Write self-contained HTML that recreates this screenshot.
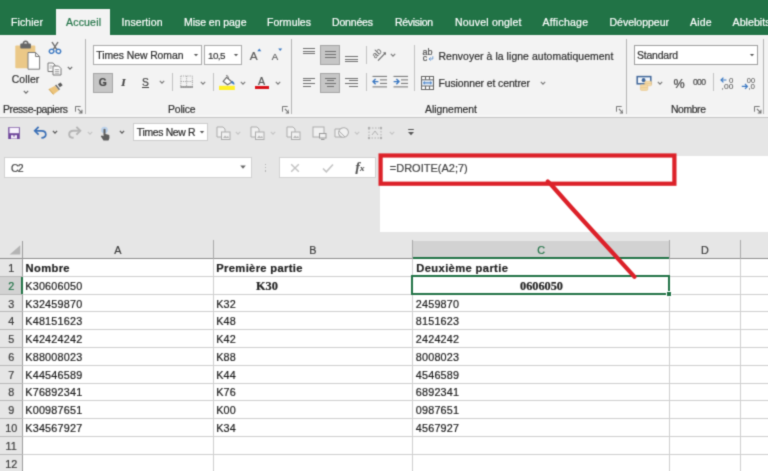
<!DOCTYPE html>
<html lang="fr"><head><meta charset="utf-8"><title>Excel - DROITE</title>
<style>
html,body{margin:0;padding:0;}
body{width:768px;height:471px;overflow:hidden;position:relative;background:#e6e6e6;font-family:"Liberation Sans",sans-serif;}
.b{position:absolute;display:block;}
.t{position:absolute;display:block;white-space:nowrap;-webkit-text-stroke:0.2px currentColor;}
#root{position:absolute;left:0;top:0;width:768px;height:471px;overflow:hidden;filter:url(#soft);}
</style></head><body><svg width="0" height="0" style="position:absolute"><defs><filter id="soft" x="0" y="0" width="100%" height="100%" color-interpolation-filters="sRGB"><feConvolveMatrix order="3" kernelMatrix="0.0256 0.1088 0.0256 0.1088 0.4624 0.1088 0.0256 0.1088 0.0256" edgeMode="duplicate" preserveAlpha="true"/></filter></defs></svg><div id="root">
<div class="b " style="left:0.00px;top:0.00px;width:768.00px;height:471.00px;background:#e6e6e6;"></div>
<div class="b " style="left:0.00px;top:0.00px;width:768.00px;height:35.00px;background:#217346;"></div>
<div class="b " style="left:0.00px;top:35.00px;width:768.00px;height:82.00px;background:#f3f3f3;"></div>
<div class="b " style="left:0.00px;top:114.50px;width:768.00px;height:2.00px;background:#f7f7f7;"></div>
<div class="b " style="left:0.00px;top:117.00px;width:768.00px;height:1.00px;background:#c4c4c4;"></div>
<div class="b " style="left:56.00px;top:9.00px;width:54.00px;height:27.00px;background:#f3f3f3;"></div>
<span class="t" style="left:11.00px;top:17.00px;font-size:10.50px;line-height:10.50px;color:#fff;letter-spacing:0.082px;">Fichier</span>
<span class="t" style="left:66.00px;top:17.00px;font-size:10.50px;line-height:10.50px;color:#217346;letter-spacing:0.192px;">Accueil</span>
<span class="t" style="left:121.50px;top:17.00px;font-size:10.50px;line-height:10.50px;color:#fff;letter-spacing:0.091px;">Insertion</span>
<span class="t" style="left:184.00px;top:17.00px;font-size:10.50px;line-height:10.50px;color:#fff;letter-spacing:-0.049px;">Mise en page</span>
<span class="t" style="left:267.00px;top:17.00px;font-size:10.50px;line-height:10.50px;color:#fff;letter-spacing:0.034px;">Formules</span>
<span class="t" style="left:332.00px;top:17.00px;font-size:10.50px;line-height:10.50px;color:#fff;letter-spacing:-0.172px;">Données</span>
<span class="t" style="left:395.00px;top:17.00px;font-size:10.50px;line-height:10.50px;color:#fff;letter-spacing:-0.324px;">Révision</span>
<span class="t" style="left:455.00px;top:17.00px;font-size:10.50px;line-height:10.50px;color:#fff;letter-spacing:0.191px;">Nouvel onglet</span>
<span class="t" style="left:542.50px;top:17.00px;font-size:10.50px;line-height:10.50px;color:#fff;letter-spacing:0.239px;">Affichage</span>
<span class="t" style="left:609.50px;top:17.00px;font-size:10.50px;line-height:10.50px;color:#fff;">Développeur</span>
<span class="t" style="left:690.00px;top:17.00px;font-size:10.50px;line-height:10.50px;color:#fff;letter-spacing:0.161px;">Aide</span>
<span class="t" style="left:732.50px;top:17.00px;font-size:10.70px;line-height:10.70px;color:#fff;">Ablebits</span>
<div class="b " style="left:85.10px;top:39.00px;width:1.00px;height:74.50px;background:#b4b4b4;"></div>
<div class="b " style="left:291.00px;top:39.00px;width:1.00px;height:74.50px;background:#b4b4b4;"></div>
<div class="b " style="left:625.90px;top:39.00px;width:1.00px;height:74.50px;background:#b4b4b4;"></div>
<div class="b " style="left:763.10px;top:39.00px;width:1.00px;height:74.50px;background:#b4b4b4;"></div>
<div class="b " style="left:172.00px;top:73.00px;width:1.00px;height:18.00px;background:#c2c2c2;"></div>
<div class="b " style="left:212.50px;top:73.00px;width:1.00px;height:18.00px;background:#c2c2c2;"></div>
<div class="b " style="left:365.50px;top:46.00px;width:1.00px;height:18.00px;background:#c2c2c2;"></div>
<div class="b " style="left:365.50px;top:73.00px;width:1.00px;height:18.00px;background:#c2c2c2;"></div>
<div class="b " style="left:413.50px;top:45.00px;width:1.00px;height:46.00px;background:#c2c2c2;"></div>
<div class="b " style="left:712.50px;top:73.00px;width:1.00px;height:18.00px;background:#c2c2c2;"></div>
<span class="t" style="left:3.00px;top:105.00px;font-size:10.40px;line-height:10.40px;color:#303030;letter-spacing:-0.380px;">Presse-papiers</span>
<span class="t" style="left:168.00px;top:105.00px;font-size:10.40px;line-height:10.40px;color:#303030;letter-spacing:-0.165px;">Police</span>
<span class="t" style="left:425.00px;top:105.00px;font-size:10.40px;line-height:10.40px;color:#303030;">Alignement</span>
<span class="t" style="left:671.00px;top:105.00px;font-size:10.40px;line-height:10.40px;color:#303030;letter-spacing:-0.398px;">Nombre</span>
<svg class="b" style="left:75.00px;top:106.20px" width="7.6" height="7.6" viewBox="0 0 8 8"><path d="M0.5 6 V0.5 H6" fill="none" stroke="#6e6e6e" stroke-width="1"/><path d="M3 3 L7 7 M7.3 4 V7.3 H4" fill="none" stroke="#6e6e6e" stroke-width="1.1"/></svg>
<svg class="b" style="left:281.60px;top:106.20px" width="7.6" height="7.6" viewBox="0 0 8 8"><path d="M0.5 6 V0.5 H6" fill="none" stroke="#6e6e6e" stroke-width="1"/><path d="M3 3 L7 7 M7.3 4 V7.3 H4" fill="none" stroke="#6e6e6e" stroke-width="1.1"/></svg>
<svg class="b" style="left:615.80px;top:106.20px" width="7.6" height="7.6" viewBox="0 0 8 8"><path d="M0.5 6 V0.5 H6" fill="none" stroke="#6e6e6e" stroke-width="1"/><path d="M3 3 L7 7 M7.3 4 V7.3 H4" fill="none" stroke="#6e6e6e" stroke-width="1.1"/></svg>
<svg class="b" style="left:754.40px;top:106.20px" width="7.6" height="7.6" viewBox="0 0 8 8"><path d="M0.5 6 V0.5 H6" fill="none" stroke="#6e6e6e" stroke-width="1"/><path d="M3 3 L7 7 M7.3 4 V7.3 H4" fill="none" stroke="#6e6e6e" stroke-width="1.1"/></svg>
<svg class="b" style="left:14.00px;top:40.00px" width="28" height="31" viewBox="0 0 28 31">
<rect x="1.3" y="5.5" width="20" height="22.7" rx="1" fill="#ebc887"/>
<rect x="6.3" y="3.6" width="10.6" height="5" rx="0.8" fill="#666"/>
<path d="M9.3 4 Q9.3 1.2 11.6 1.2 Q13.9 1.2 13.9 4" fill="none" stroke="#666" stroke-width="1.5"/>
<path d="M14 12.5 H21.6 L25.6 16.5 V29.2 H14 Z" fill="#fff" stroke="#7a7a7a" stroke-width="1"/>
<path d="M21.6 12.5 V16.5 H25.6" fill="none" stroke="#7a7a7a" stroke-width="1"/>
</svg>
<span class="t" style="left:11.80px;top:75.00px;font-size:10.40px;line-height:10.40px;color:#303030;letter-spacing:0.047px;">Coller</span>
<svg class="b" style="left:21.70px;top:88.30px" width="8" height="8" viewBox="0 0 8 8"><path d="M1.7999999999999998 2.9 L4 5.1 L6.2 2.9" fill="none" stroke="#666" stroke-width="1.1"/></svg>
<svg class="b" style="left:47.50px;top:40.50px" width="14" height="14" viewBox="0 0 14 14">
<path d="M4 1 L8.8 8.6 M10 1 L5.2 8.6" stroke="#6a6a6a" stroke-width="1.4" fill="none"/>
<ellipse cx="3.6" cy="10.3" rx="2.3" ry="2" fill="none" stroke="#3b78c2" stroke-width="1.4" transform="rotate(-25 3.6 10.3)"/>
<ellipse cx="10.4" cy="10.3" rx="2.3" ry="2" fill="none" stroke="#3b78c2" stroke-width="1.4" transform="rotate(25 10.4 10.3)"/>
</svg>
<svg class="b" style="left:46.50px;top:61.50px" width="15" height="14" viewBox="0 0 15 14">
<path d="M1 1 H6 L8 3 V9.5 H1 Z" fill="#fff" stroke="#777" stroke-width="1"/>
<path d="M2.6 4 H5.2 M2.6 6 H4.6" stroke="#8a8a8a" stroke-width="0.8"/>
<path d="M6 4 H11.5 L14 6.5 V13 H6 Z" fill="#fff" stroke="#777" stroke-width="1"/>
<path d="M7.8 7.6 H12.2 M7.8 9.4 H12.2 M7.8 11.2 H12.2" stroke="#8a8a8a" stroke-width="0.8"/>
</svg>
<svg class="b" style="left:66.20px;top:64.00px" width="8" height="8" viewBox="0 0 8 8"><path d="M1.7999999999999998 2.9 L4 5.1 L6.2 2.9" fill="none" stroke="#666" stroke-width="1.1"/></svg>
<svg class="b" style="left:47.50px;top:82.00px" width="15" height="13" viewBox="0 0 15 13">
<path d="M9.8 2.2 L12.6 0.4 L14.6 3.2 L11.8 5.2 Z" fill="#5a5a5a"/>
<path d="M8.2 2.6 L12 7.2 L10.8 8.2 L7 3.6 Z" fill="#6a6a6a"/>
<path d="M7 3.8 L10.8 8.4 L5.4 12.4 L0.8 7 Z" fill="#ecc47c"/>
<path d="M0.8 7 L5.4 12.4" stroke="#c99b45" stroke-width="0.9" fill="none"/>
</svg>
<div class="b " style="left:93.30px;top:45.40px;width:108.50px;height:20.00px;background:#fff;border:1px solid #ababab;box-sizing:border-box;"></div>
<span class="t" style="left:96.30px;top:51.00px;font-size:10.40px;line-height:10.40px;color:#2e2e2e;letter-spacing:-0.060px;">Times New Roman</span>
<svg class="b" style="left:191.80px;top:51.40px" width="8" height="8" viewBox="0 0 8 8"><path d="M1.9 2.95 L6.1 2.95 L4 5.35 Z" fill="#555"/></svg>
<div class="b " style="left:204.40px;top:45.40px;width:38.00px;height:20.00px;background:#fff;border:1px solid #ababab;box-sizing:border-box;"></div>
<span class="t" style="left:208.00px;top:51.00px;font-size:9.80px;line-height:9.80px;color:#333;letter-spacing:-0.525px;">10,5</span>
<svg class="b" style="left:231.60px;top:51.40px" width="8" height="8" viewBox="0 0 8 8"><path d="M1.9 2.95 L6.1 2.95 L4 5.35 Z" fill="#555"/></svg>
<span class="t" style="left:249.80px;top:51.00px;font-size:11.80px;line-height:11.80px;color:#5a5a5a;">A</span>
<svg class="b" style="left:256.60px;top:48.20px" width="5" height="4" viewBox="0 0 5 4"><path d="M0.3 3.3 L2.3 0.5 L4.3 3.3 Z" fill="#3b78c2"/></svg>
<span class="t" style="left:271.80px;top:52.00px;font-size:9.60px;line-height:9.60px;color:#5a5a5a;">A</span>
<svg class="b" style="left:278.00px;top:48.00px" width="5" height="4" viewBox="0 0 5 4"><path d="M0.2 0.6 L4.2 0.6 L2.2 3 Z" fill="#3b78c2"/></svg>
<div class="b " style="left:93.30px;top:73.00px;width:19.50px;height:19.70px;background:#c6c6c6;border:1px solid #a6a6a6;box-sizing:border-box;"></div>
<span class="t" style="left:98.79px;top:78.00px;font-size:10.30px;line-height:10.30px;color:#444;font-weight:bold;">G</span>
<span class="t" style="left:121.20px;top:77.00px;font-size:11.30px;line-height:11.30px;color:#444;font-weight:bold;font-style:italic;font-family:'Liberation Serif', serif;">I</span>
<span class="t" style="left:142.06px;top:78.00px;font-size:10.30px;line-height:10.30px;color:#444;">S</span>
<div class="b " style="left:142.00px;top:86.60px;width:7.00px;height:1.00px;background:#444;"></div>
<svg class="b" style="left:157.60px;top:78.40px" width="8" height="8" viewBox="0 0 8 8"><path d="M1.7999999999999998 2.9 L4 5.1 L6.2 2.9" fill="none" stroke="#777" stroke-width="1.1"/></svg>
<svg class="b" style="left:179.50px;top:75.40px" width="14" height="13" viewBox="0 0 14 13">
<rect x="0.8" y="1" width="11.6" height="11" fill="none" stroke="#a0a0a0" stroke-width="1" stroke-dasharray="1.1 1.1"/>
<path d="M6.6 1 V12 M0.8 6.5 H12.4" stroke="#a0a0a0" stroke-width="1" stroke-dasharray="1.1 1.1"/>
<path d="M0.3 12 H13" stroke="#666" stroke-width="1.1"/>
</svg>
<svg class="b" style="left:198.50px;top:78.50px" width="8" height="8" viewBox="0 0 8 8"><path d="M1.7999999999999998 2.9 L4 5.1 L6.2 2.9" fill="none" stroke="#777" stroke-width="1.1"/></svg>
<svg class="b" style="left:219.00px;top:74.00px" width="17" height="17" viewBox="0 0 17 17">
<path d="M7.6 3.4 L13 8 L8.6 10.8 L4.2 7.4 Z" fill="#fff" stroke="#666" stroke-width="1.1"/>
<path d="M7.2 1.6 Q9.4 1.2 9.4 5" stroke="#666" stroke-width="1" fill="none"/>
<path d="M13 6.8 Q16.2 8.6 15.2 11 Q13.8 9.4 12 9 Z" fill="#3b78c2"/>
<rect x="0" y="11.8" width="15.8" height="4.2" fill="#fff028"/>
</svg>
<svg class="b" style="left:239.20px;top:78.50px" width="8" height="8" viewBox="0 0 8 8"><path d="M1.7999999999999998 2.9 L4 5.1 L6.2 2.9" fill="none" stroke="#777" stroke-width="1.1"/></svg>
<span class="t" style="left:258.00px;top:76.00px;font-size:10.60px;line-height:10.60px;color:#555;">A</span>
<div class="b " style="left:254.60px;top:85.60px;width:14.40px;height:3.80px;background:#d9141c;"></div>
<svg class="b" style="left:274.00px;top:78.50px" width="8" height="8" viewBox="0 0 8 8"><path d="M1.7999999999999998 2.9 L4 5.1 L6.2 2.9" fill="none" stroke="#777" stroke-width="1.1"/></svg>
<div class="b " style="left:302.70px;top:48.30px;width:12.60px;height:1.00px;background:#707070;"></div>
<div class="b " style="left:302.70px;top:50.80px;width:12.60px;height:1.00px;background:#707070;"></div>
<div class="b " style="left:302.70px;top:53.30px;width:12.60px;height:1.00px;background:#707070;"></div>
<div class="b " style="left:320.40px;top:45.20px;width:19.60px;height:20.20px;background:#c6c6c6;border:1px solid #a6a6a6;box-sizing:border-box;"></div>
<div class="b " style="left:324.50px;top:51.10px;width:11.60px;height:1.00px;background:#707070;"></div>
<div class="b " style="left:324.50px;top:53.80px;width:11.60px;height:1.00px;background:#707070;"></div>
<div class="b " style="left:324.50px;top:56.50px;width:11.60px;height:1.00px;background:#707070;"></div>
<div class="b " style="left:345.40px;top:56.10px;width:12.60px;height:1.00px;background:#707070;"></div>
<div class="b " style="left:345.40px;top:58.60px;width:12.60px;height:1.00px;background:#707070;"></div>
<div class="b " style="left:345.40px;top:61.10px;width:12.60px;height:1.00px;background:#707070;"></div>
<div class="b " style="left:302.70px;top:77.60px;width:12.60px;height:1.00px;background:#707070;"></div>
<div class="b " style="left:302.70px;top:80.30px;width:8.60px;height:1.00px;background:#707070;"></div>
<div class="b " style="left:302.70px;top:83.00px;width:12.60px;height:1.00px;background:#707070;"></div>
<div class="b " style="left:302.70px;top:85.70px;width:8.60px;height:1.00px;background:#707070;"></div>
<div class="b " style="left:320.40px;top:72.80px;width:19.60px;height:19.80px;background:#c6c6c6;border:1px solid #a6a6a6;box-sizing:border-box;"></div>
<div class="b " style="left:324.50px;top:77.60px;width:11.60px;height:1.00px;background:#707070;"></div>
<div class="b " style="left:326.50px;top:80.30px;width:7.60px;height:1.00px;background:#707070;"></div>
<div class="b " style="left:324.50px;top:83.00px;width:11.60px;height:1.00px;background:#707070;"></div>
<div class="b " style="left:326.50px;top:85.70px;width:7.60px;height:1.00px;background:#707070;"></div>
<div class="b " style="left:345.40px;top:77.60px;width:12.60px;height:1.00px;background:#707070;"></div>
<div class="b " style="left:349.40px;top:80.30px;width:8.60px;height:1.00px;background:#707070;"></div>
<div class="b " style="left:345.40px;top:83.00px;width:12.60px;height:1.00px;background:#707070;"></div>
<div class="b " style="left:349.40px;top:85.70px;width:8.60px;height:1.00px;background:#707070;"></div>
<svg class="b" style="left:371.00px;top:46.00px" width="17" height="17" viewBox="0 0 17 17">
<text x="2" y="10.5" font-size="9.2" fill="#555" font-family="Liberation Sans, sans-serif" transform="rotate(-45 6 9)">ab</text>
<path d="M7 14.6 L14.2 7.2" stroke="#666" stroke-width="1.1"/>
<path d="M12 6.6 L15 6.2 L14.6 9.2 Z" fill="#666"/>
</svg>
<svg class="b" style="left:389.40px;top:51.00px" width="8" height="8" viewBox="0 0 8 8"><path d="M1.7999999999999998 2.9 L4 5.1 L6.2 2.9" fill="none" stroke="#777" stroke-width="1.1"/></svg>
<svg class="b" style="left:371.50px;top:75.00px" width="16" height="14" viewBox="0 0 16 14">
<path d="M0.5 1.4 H15 M0.5 11.9 H15" stroke="#707070" stroke-width="1"/>
<path d="M8 4.9 H15 M8 8.4 H15" stroke="#707070" stroke-width="1"/>
<path d="M6.4 6.6 H1.2 M3.6 4 L1 6.6 L3.6 9.2" stroke="#3b78c2" stroke-width="1.4" fill="none"/>
</svg>
<svg class="b" style="left:392.70px;top:75.00px" width="16" height="14" viewBox="0 0 16 14">
<path d="M0.5 1.4 H15 M0.5 11.9 H15" stroke="#707070" stroke-width="1"/>
<path d="M8 4.9 H15 M8 8.4 H15" stroke="#707070" stroke-width="1"/>
<path d="M0.6 6.6 H5.8 M3.4 4 L6 6.6 L3.4 9.2" stroke="#3b78c2" stroke-width="1.4" fill="none"/>
</svg>
<span class="t" style="left:422.60px;top:48.00px;font-size:9.00px;line-height:9.00px;color:#505050;letter-spacing:-0.011px;">ab</span>
<span class="t" style="left:422.80px;top:54.00px;font-size:9.00px;line-height:9.00px;color:#505050;">c</span>
<svg class="b" style="left:427.60px;top:55.60px" width="6" height="6" viewBox="0 0 6 6"><path d="M4.8 0.3 V3 H1.2 M2.6 1.4 L1 3 L2.6 4.6" stroke="#6d9bd1" stroke-width="1" fill="none"/></svg>
<span class="t" style="left:438.50px;top:52.00px;font-size:10.40px;line-height:10.40px;color:#2e2e2e;letter-spacing:0.080px;">Renvoyer à la ligne automatiquement</span>
<svg class="b" style="left:421.00px;top:75.50px" width="13" height="14" viewBox="0 0 13 14">
<rect x="0.5" y="0.5" width="12" height="13" fill="#fff" stroke="#666" stroke-width="1"/>
<rect x="1" y="4" width="11" height="5.8" fill="#e3edf8"/>
<path d="M0.5 3.8 H12.5 M0.5 10 H12.5 M4.5 0.5 V3.8 M8.5 0.5 V3.8 M4.5 10 V13.5 M8.5 10 V13.5" stroke="#666" stroke-width="1"/>
<path d="M2.6 6.9 H10.4" stroke="#3b78c2" stroke-width="1.1"/>
<path d="M4 5.6 L2.4 6.9 L4 8.2 M9 5.6 L10.6 6.9 L9 8.2" stroke="#3b78c2" stroke-width="0.9" fill="none"/>
</svg>
<span class="t" style="left:438.50px;top:79.00px;font-size:10.40px;line-height:10.40px;color:#2e2e2e;letter-spacing:-0.082px;">Fusionner et centrer</span>
<svg class="b" style="left:539.00px;top:78.50px" width="8" height="8" viewBox="0 0 8 8"><path d="M1.7999999999999998 2.9 L4 5.1 L6.2 2.9" fill="none" stroke="#777" stroke-width="1.1"/></svg>
<div class="b " style="left:633.90px;top:45.20px;width:124.20px;height:20.30px;background:#fff;border:1px solid #a0a0a0;box-sizing:border-box;"></div>
<span class="t" style="left:637.00px;top:51.00px;font-size:10.40px;line-height:10.40px;color:#2e2e2e;letter-spacing:-0.173px;">Standard</span>
<svg class="b" style="left:747.60px;top:51.30px" width="8" height="8" viewBox="0 0 8 8"><path d="M1.9 2.95 L6.1 2.95 L4 5.35 Z" fill="#555"/></svg>
<svg class="b" style="left:635.50px;top:74.50px" width="17" height="17" viewBox="0 0 17 17">
<rect x="1.2" y="1.6" width="13.6" height="7.2" fill="#f2f6fb" stroke="#41679a" stroke-width="1.5"/>
<ellipse cx="7.6" cy="5.2" rx="1.9" ry="2.1" fill="#41679a"/>
<rect x="8.8" y="6.2" width="6.8" height="4.6" rx="1.2" fill="#f3d9a6" stroke="#e6c388" stroke-width="0.6"/>
<path d="M9 8.5 H15.4" stroke="#e6c388" stroke-width="0.6"/>
<rect x="4.4" y="9.8" width="7.4" height="5.6" rx="1.2" fill="#f3d9a6" stroke="#e6c388" stroke-width="0.6"/>
<path d="M4.6 12.6 H11.6" stroke="#e6c388" stroke-width="0.6"/>
</svg>
<svg class="b" style="left:655.90px;top:78.80px" width="8" height="8" viewBox="0 0 8 8"><path d="M1.7999999999999998 2.9 L4 5.1 L6.2 2.9" fill="none" stroke="#777" stroke-width="1.1"/></svg>
<span class="t" style="left:673.60px;top:78.00px;font-size:12.60px;line-height:12.60px;color:#444;">%</span>
<span class="t" style="left:693.00px;top:78.00px;font-size:8.60px;line-height:8.60px;color:#444;letter-spacing:-0.674px;">000</span>
<svg class="b" style="left:719.50px;top:75.50px" width="15" height="14" viewBox="0 0 15 14">
<path d="M1 4 H6.4 M3.4 1.6 L1 4 L3.4 6.4" stroke="#3b78c2" stroke-width="1.2" fill="none"/>
<text x="9" y="6.6" textLength="4.4" font-family="Liberation Sans, sans-serif" fill="#4a4a4a" font-size="8" lengthAdjust="spacingAndGlyphs">0</text>
<text x="1.6" y="13" textLength="11.8" font-family="Liberation Sans, sans-serif" fill="#4a4a4a" font-size="8" lengthAdjust="spacingAndGlyphs">,00</text>
</svg>
<svg class="b" style="left:740.50px;top:75.50px" width="15" height="14" viewBox="0 0 15 14">
<text x="5.8" y="6.6" textLength="8.2" font-family="Liberation Sans, sans-serif" fill="#4a4a4a" font-size="8" lengthAdjust="spacingAndGlyphs">00</text>
<path d="M0.8 10.4 H6.4 M4 8 L6.4 10.4 L4 12.8" stroke="#3b78c2" stroke-width="1.2" fill="none"/>
<text x="7.4" y="13" textLength="6.6" font-family="Liberation Sans, sans-serif" fill="#4a4a4a" font-size="8" lengthAdjust="spacingAndGlyphs">,0</text>
</svg>
<svg class="b" style="left:8.00px;top:126.80px" width="12" height="12.2" viewBox="0 0 12 12.2">
<rect x="0.2" y="0.2" width="11.6" height="11.8" fill="#70489c"/>
<rect x="1.5" y="0.8" width="9.4" height="5.4" fill="#f7f2fc"/>
<rect x="3" y="8.2" width="6" height="3.4" fill="#f4eefa"/>
<rect x="5.3" y="8.2" width="1.4" height="1.4" fill="#70489c"/>
</svg>
<svg class="b" style="left:32.60px;top:126.30px" width="15" height="13" viewBox="0 0 15 13">
<path d="M2 4.8 H8.6 Q12.8 4.8 12.8 8.4 Q12.8 11.6 8.4 11.8" fill="none" stroke="#3a6fb6" stroke-width="1.7"/>
<path d="M5.6 0.9 L1.7 4.8 L5.6 8.7" fill="none" stroke="#3a6fb6" stroke-width="1.7"/>
</svg>
<svg class="b" style="left:51.00px;top:128.30px" width="8" height="8" viewBox="0 0 8 8"><path d="M1.9 2.95 L4 5.05 L6.1 2.95" fill="none" stroke="#555" stroke-width="1.2"/></svg>
<svg class="b" style="left:66.80px;top:126.30px" width="15" height="13" viewBox="0 0 15 13">
<path d="M13 4.8 H6.4 Q2.2 4.8 2.2 8.4 Q2.2 11.6 6.6 11.8" fill="none" stroke="#b4b4b4" stroke-width="1.9"/>
<path d="M9.4 0.9 L13.3 4.8 L9.4 8.7" fill="none" stroke="#b4b4b4" stroke-width="1.9"/>
</svg>
<svg class="b" style="left:85.50px;top:128.50px" width="8" height="8" viewBox="0 0 8 8"><path d="M1.7999999999999998 2.9 L4 5.1 L6.2 2.9" fill="none" stroke="#c4c4c4" stroke-width="1.1"/></svg>
<svg class="b" style="left:99.00px;top:125.50px" width="12" height="15" viewBox="0 0 12 15">
<circle cx="5.5" cy="4" r="3.3" fill="#b9d0ea"/>
<path d="M4.5 3.2 Q5.5 2.2 6.5 3.2 V8 L10.3 9 Q11 12 9.5 14.5 H4.5 L1.8 10.2 Q2.8 9 4.5 10.3 Z" fill="#5e5e5e"/>
</svg>
<svg class="b" style="left:118.00px;top:128.30px" width="8" height="8" viewBox="0 0 8 8"><path d="M1.9 2.95 L4 5.05 L6.1 2.95" fill="none" stroke="#555" stroke-width="1.2"/></svg>
<div class="b " style="left:133.10px;top:122.60px;width:75.20px;height:18.80px;background:#fff;border:1px solid #cdcdcd;box-sizing:border-box;"></div>
<span class="t" style="left:136.80px;top:128.00px;font-size:10.40px;line-height:10.40px;color:#2e2e2e;letter-spacing:-0.322px;">Times New R</span>
<svg class="b" style="left:198.00px;top:128.20px" width="8" height="8" viewBox="0 0 8 8"><path d="M1.7999999999999998 2.9 L6.2 2.9 L4 5.3999999999999995 Z" fill="#555"/></svg>
<svg class="b" style="left:215.50px;top:126.00px" width="15" height="14" viewBox="0 0 15 14">
<path d="M1 1 H7 L9 3 V11 H1 Z" fill="#f1f1f1" stroke="#ababab" stroke-width="1"/>
<rect x="5.5" y="6" width="8.5" height="7.5" fill="#f1f1f1" stroke="#ababab" stroke-width="1"/>
<path d="M7 12 L9 9.5 L10.5 11 L12 10 L13 12 Z" fill="#b5b5b5"/>
</svg>
<svg class="b" style="left:234.00px;top:128.50px" width="8" height="8" viewBox="0 0 8 8"><path d="M1.7999999999999998 2.9 L4 5.1 L6.2 2.9" fill="none" stroke="#c4c4c4" stroke-width="1.1"/></svg>
<svg class="b" style="left:249.50px;top:126.00px" width="15" height="14" viewBox="0 0 15 14">
<path d="M1 1 H7 L9 3 V11 H1 Z" fill="#f1f1f1" stroke="#ababab" stroke-width="1"/>
<rect x="5.5" y="6" width="8.5" height="7.5" fill="#f1f1f1" stroke="#ababab" stroke-width="1"/>
<path d="M7 12 L9 9.5 L10.5 11 L12 10 L13 12 Z" fill="#b5b5b5"/>
</svg>
<svg class="b" style="left:268.50px;top:128.50px" width="8" height="8" viewBox="0 0 8 8"><path d="M1.7999999999999998 2.9 L4 5.1 L6.2 2.9" fill="none" stroke="#c4c4c4" stroke-width="1.1"/></svg>
<svg class="b" style="left:286.00px;top:126.00px" width="15" height="14" viewBox="0 0 15 14">
<path d="M1 1 H7 L9 3 V11 H1 Z" fill="#f1f1f1" stroke="#ababab" stroke-width="1"/>
<rect x="5.5" y="6" width="8.5" height="7.5" fill="#f1f1f1" stroke="#ababab" stroke-width="1"/>
<path d="M7 12 L9 9.5 L10.5 11 L12 10 L13 12 Z" fill="#b5b5b5"/>
</svg>
<svg class="b" style="left:311.50px;top:126.00px" width="15" height="14" viewBox="0 0 15 14">
<rect x="1" y="1" width="11" height="10" fill="#f1f1f1" stroke="#ababab" stroke-width="1"/>
<rect x="7.5" y="7.5" width="6.5" height="4.5" fill="#f1f1f1" stroke="#999" stroke-width="1"/>
<path d="M9 13.5 H12.5" stroke="#999" stroke-width="1"/>
</svg>
<svg class="b" style="left:333.50px;top:126.00px" width="16" height="14" viewBox="0 0 16 14">
<path d="M1 3 H8 V11 H1 Z" fill="#f1f1f1" stroke="#ababab" stroke-width="1"/>
<ellipse cx="9.5" cy="6.5" rx="5" ry="4.8" fill="#f1f1f1" stroke="#ababab" stroke-width="1" transform="rotate(-35 9.5 6.5)"/>
<path d="M5 5 L11 11" stroke="#ababab" stroke-width="1"/>
</svg>
<svg class="b" style="left:353.00px;top:128.50px" width="8" height="8" viewBox="0 0 8 8"><path d="M1.7999999999999998 2.9 L4 5.1 L6.2 2.9" fill="none" stroke="#c4c4c4" stroke-width="1.1"/></svg>
<svg class="b" style="left:367.00px;top:126.00px" width="16" height="14" viewBox="0 0 16 14">
<rect x="2" y="2" width="12" height="10" fill="none" stroke="#b0b0b0" stroke-width="1" stroke-dasharray="1.5 1.5"/>
<circle cx="2" cy="2" r="1.2" fill="#b0b0b0"/><circle cx="14" cy="2" r="1.2" fill="#b0b0b0"/><circle cx="2" cy="12" r="1.2" fill="#b0b0b0"/><circle cx="14" cy="12" r="1.2" fill="#b0b0b0"/>
<path d="M5 9 L8 5 L11 9" stroke="#b0b0b0" fill="none" stroke-width="1"/>
</svg>
<svg class="b" style="left:387.50px;top:128.50px" width="8" height="8" viewBox="0 0 8 8"><path d="M1.7999999999999998 2.9 L4 5.1 L6.2 2.9" fill="none" stroke="#c4c4c4" stroke-width="1.1"/></svg>
<svg class="b" style="left:406.50px;top:128.00px" width="8" height="9" viewBox="0 0 8 9"><path d="M1.2 1.5 H6.8" stroke="#555" stroke-width="1"/><path d="M1 4 H7 L4 7.2 Z" fill="#555"/></svg>
<div class="b " style="left:4.20px;top:156.50px;width:247.40px;height:21.90px;background:#fff;border:1px solid #d2d2d2;box-sizing:border-box;"></div>
<span class="t" style="left:11.00px;top:163.00px;font-size:10.50px;line-height:10.50px;color:#444;letter-spacing:-0.722px;">C2</span>
<svg class="b" style="left:239.10px;top:162.50px" width="8" height="8" viewBox="0 0 8 8"><path d="M1.2000000000000002 2.6 L6.8 2.6 L4 5.7 Z" fill="#666"/></svg>
<div class="b " style="left:264.50px;top:163.60px;width:1.20px;height:1.20px;background:#b5b5b5;"></div>
<div class="b " style="left:264.50px;top:167.00px;width:1.20px;height:1.20px;background:#b5b5b5;"></div>
<div class="b " style="left:264.50px;top:170.40px;width:1.20px;height:1.20px;background:#b5b5b5;"></div>
<div class="b " style="left:279.40px;top:156.50px;width:97.10px;height:21.90px;background:#fff;border:1px solid #d2d2d2;box-sizing:border-box;"></div>
<svg class="b" style="left:290.40px;top:162.80px" width="10" height="10" viewBox="0 0 10 10"><path d="M1.2 1.2 L8.8 8.8 M8.8 1.2 L1.2 8.8" stroke="#c2c2c2" stroke-width="1.4"/></svg>
<svg class="b" style="left:322.20px;top:162.90px" width="12" height="10" viewBox="0 0 12 10"><path d="M1 5.5 L4.3 8.8 L11 1.5" stroke="#c2c2c2" stroke-width="1.5" fill="none"/></svg>
<span class="t" style="left:355.60px;top:160.00px;font-size:13.00px;line-height:13.00px;color:#555;font-weight:bold;font-style:italic;font-family:'Liberation Serif', serif;">f</span>
<span class="t" style="left:360.00px;top:164.00px;font-size:8.80px;line-height:8.80px;color:#555;font-weight:bold;font-style:italic;font-family:'Liberation Serif', serif;">x</span>
<div class="b " style="left:380.00px;top:155.50px;width:388.00px;height:76.10px;background:#fff;"></div>
<span class="t" style="left:389.80px;top:163.00px;font-size:11.00px;line-height:11.00px;color:#444;">=DROITE(A2;7)</span>
<div class="b " style="left:22.50px;top:258.50px;width:745.50px;height:212.50px;background:#fff;"></div>
<div class="b " style="left:412.60px;top:241.00px;width:257.00px;height:17.50px;background:#d2d2d2;"></div>
<div class="b " style="left:412.60px;top:256.80px;width:257.00px;height:2.00px;background:#217346;"></div>
<div class="b " style="left:0.00px;top:276.30px;width:22.50px;height:17.80px;background:#d2d2d2;"></div>
<div class="b " style="left:21.20px;top:276.30px;width:1.60px;height:17.80px;background:#217346;"></div>
<div class="b " style="left:0.00px;top:257.80px;width:412.60px;height:1.00px;background:#8e8e8e;"></div>
<div class="b " style="left:669.60px;top:257.80px;width:98.40px;height:1.00px;background:#8e8e8e;"></div>
<div class="b " style="left:22.00px;top:241.00px;width:1.00px;height:17.50px;background:#9c9c9c;"></div>
<div class="b " style="left:212.80px;top:240.00px;width:1.00px;height:18.50px;background:#aaaaaa;"></div>
<div class="b " style="left:412.10px;top:240.00px;width:1.00px;height:18.50px;background:#aaaaaa;"></div>
<div class="b " style="left:669.10px;top:240.00px;width:1.00px;height:18.50px;background:#aaaaaa;"></div>
<div class="b " style="left:739.70px;top:240.00px;width:1.00px;height:18.50px;background:#aaaaaa;"></div>
<div class="b " style="left:22.00px;top:258.50px;width:1.00px;height:17.80px;background:#9c9c9c;"></div>
<div class="b " style="left:22.00px;top:294.10px;width:1.00px;height:176.90px;background:#9c9c9c;"></div>
<div class="b " style="left:0.00px;top:275.80px;width:22.50px;height:1.00px;background:#b8b8b8;"></div>
<div class="b " style="left:0.00px;top:293.60px;width:22.50px;height:1.00px;background:#b8b8b8;"></div>
<div class="b " style="left:0.00px;top:311.40px;width:22.50px;height:1.00px;background:#b8b8b8;"></div>
<div class="b " style="left:0.00px;top:329.20px;width:22.50px;height:1.00px;background:#b8b8b8;"></div>
<div class="b " style="left:0.00px;top:347.00px;width:22.50px;height:1.00px;background:#b8b8b8;"></div>
<div class="b " style="left:0.00px;top:364.80px;width:22.50px;height:1.00px;background:#b8b8b8;"></div>
<div class="b " style="left:0.00px;top:382.60px;width:22.50px;height:1.00px;background:#b8b8b8;"></div>
<div class="b " style="left:0.00px;top:400.40px;width:22.50px;height:1.00px;background:#b8b8b8;"></div>
<div class="b " style="left:0.00px;top:418.20px;width:22.50px;height:1.00px;background:#b8b8b8;"></div>
<div class="b " style="left:0.00px;top:436.00px;width:22.50px;height:1.00px;background:#b8b8b8;"></div>
<div class="b " style="left:0.00px;top:453.80px;width:22.50px;height:1.00px;background:#b8b8b8;"></div>
<div class="b " style="left:0.00px;top:471.60px;width:22.50px;height:1.00px;background:#b8b8b8;"></div>
<div class="b " style="left:23.00px;top:275.80px;width:745.00px;height:1.00px;background:#cfcfcf;"></div>
<div class="b " style="left:23.00px;top:293.60px;width:745.00px;height:1.00px;background:#cfcfcf;"></div>
<div class="b " style="left:23.00px;top:311.40px;width:745.00px;height:1.00px;background:#cfcfcf;"></div>
<div class="b " style="left:23.00px;top:329.20px;width:745.00px;height:1.00px;background:#cfcfcf;"></div>
<div class="b " style="left:23.00px;top:347.00px;width:745.00px;height:1.00px;background:#cfcfcf;"></div>
<div class="b " style="left:23.00px;top:364.80px;width:745.00px;height:1.00px;background:#cfcfcf;"></div>
<div class="b " style="left:23.00px;top:382.60px;width:745.00px;height:1.00px;background:#cfcfcf;"></div>
<div class="b " style="left:23.00px;top:400.40px;width:745.00px;height:1.00px;background:#cfcfcf;"></div>
<div class="b " style="left:23.00px;top:418.20px;width:745.00px;height:1.00px;background:#cfcfcf;"></div>
<div class="b " style="left:23.00px;top:436.00px;width:745.00px;height:1.00px;background:#cfcfcf;"></div>
<div class="b " style="left:23.00px;top:453.80px;width:745.00px;height:1.00px;background:#cfcfcf;"></div>
<div class="b " style="left:23.00px;top:471.60px;width:745.00px;height:1.00px;background:#cfcfcf;"></div>
<div class="b " style="left:212.80px;top:259.00px;width:1.00px;height:212.00px;background:#cfcfcf;"></div>
<div class="b " style="left:412.10px;top:259.00px;width:1.00px;height:212.00px;background:#cfcfcf;"></div>
<div class="b " style="left:669.10px;top:259.00px;width:1.00px;height:212.00px;background:#cfcfcf;"></div>
<div class="b " style="left:739.70px;top:259.00px;width:1.00px;height:212.00px;background:#cfcfcf;"></div>
<svg class="b" style="left:9.00px;top:245.00px" width="12" height="10" viewBox="0 0 12 10"><path d="M11.3 0.3 V9.6 H0.7 Z" fill="#b4b4b4"/></svg>
<span class="t" style="left:114.30px;top:245.00px;font-size:10.80px;line-height:10.80px;color:#3c3c3c;">A</span>
<span class="t" style="left:309.35px;top:245.00px;font-size:10.80px;line-height:10.80px;color:#3c3c3c;">B</span>
<span class="t" style="left:537.20px;top:245.00px;font-size:10.80px;line-height:10.80px;color:#217346;">C</span>
<span class="t" style="left:701.00px;top:245.00px;font-size:10.80px;line-height:10.80px;color:#3c3c3c;">D</span>
<span class="t" style="left:8.20px;top:263.00px;font-size:10.80px;line-height:10.80px;color:#3c3c3c;">1</span>
<span class="t" style="left:8.20px;top:281.00px;font-size:10.80px;line-height:10.80px;color:#217346;">2</span>
<span class="t" style="left:8.20px;top:299.00px;font-size:10.80px;line-height:10.80px;color:#3c3c3c;">3</span>
<span class="t" style="left:8.20px;top:316.00px;font-size:10.80px;line-height:10.80px;color:#3c3c3c;">4</span>
<span class="t" style="left:8.20px;top:334.00px;font-size:10.80px;line-height:10.80px;color:#3c3c3c;">5</span>
<span class="t" style="left:8.20px;top:352.00px;font-size:10.80px;line-height:10.80px;color:#3c3c3c;">6</span>
<span class="t" style="left:8.20px;top:370.00px;font-size:10.80px;line-height:10.80px;color:#3c3c3c;">7</span>
<span class="t" style="left:8.20px;top:387.00px;font-size:10.80px;line-height:10.80px;color:#3c3c3c;">8</span>
<span class="t" style="left:8.20px;top:405.00px;font-size:10.80px;line-height:10.80px;color:#3c3c3c;">9</span>
<span class="t" style="left:5.19px;top:423.00px;font-size:10.80px;line-height:10.80px;color:#3c3c3c;">10</span>
<span class="t" style="left:5.59px;top:441.00px;font-size:10.80px;line-height:10.80px;color:#3c3c3c;">11</span>
<span class="t" style="left:5.19px;top:459.00px;font-size:10.80px;line-height:10.80px;color:#3c3c3c;">12</span>
<span class="t" style="left:25.60px;top:263.00px;font-size:11.20px;line-height:11.20px;color:#222;letter-spacing:0.337px;font-weight:bold;">Nombre</span>
<span class="t" style="left:216.30px;top:263.00px;font-size:11.20px;line-height:11.20px;color:#222;letter-spacing:0.339px;font-weight:bold;">Première partie</span>
<span class="t" style="left:416.30px;top:263.00px;font-size:11.20px;line-height:11.20px;color:#222;letter-spacing:0.370px;font-weight:bold;">Deuxième partie</span>
<span class="t" style="left:25.30px;top:281.00px;font-size:10.80px;line-height:10.80px;color:#1c1c1c;letter-spacing:0.200px;">K30606050</span>
<span class="t" style="left:256.00px;top:280.00px;font-size:12.37px;line-height:12.37px;color:#222;font-weight:bold;font-family:'Liberation Serif', serif;">K30</span>
<span class="t" style="left:520.00px;top:280.00px;font-size:12.29px;line-height:12.29px;color:#222;font-weight:bold;font-family:'Liberation Serif', serif;">0606050</span>
<span class="t" style="left:25.30px;top:299.00px;font-size:10.80px;line-height:10.80px;color:#1c1c1c;letter-spacing:0.200px;">K32459870</span>
<span class="t" style="left:216.20px;top:299.00px;font-size:10.80px;line-height:10.80px;color:#1c1c1c;letter-spacing:0.200px;">K32</span>
<span class="t" style="left:415.80px;top:299.00px;font-size:10.80px;line-height:10.80px;color:#1c1c1c;letter-spacing:0.200px;">2459870</span>
<span class="t" style="left:25.30px;top:316.00px;font-size:10.80px;line-height:10.80px;color:#1c1c1c;letter-spacing:0.200px;">K48151623</span>
<span class="t" style="left:216.20px;top:316.00px;font-size:10.80px;line-height:10.80px;color:#1c1c1c;letter-spacing:0.200px;">K48</span>
<span class="t" style="left:415.80px;top:316.00px;font-size:10.80px;line-height:10.80px;color:#1c1c1c;letter-spacing:0.200px;">8151623</span>
<span class="t" style="left:25.30px;top:334.00px;font-size:10.80px;line-height:10.80px;color:#1c1c1c;letter-spacing:0.200px;">K42424242</span>
<span class="t" style="left:216.20px;top:334.00px;font-size:10.80px;line-height:10.80px;color:#1c1c1c;letter-spacing:0.200px;">K42</span>
<span class="t" style="left:415.80px;top:334.00px;font-size:10.80px;line-height:10.80px;color:#1c1c1c;letter-spacing:0.200px;">2424242</span>
<span class="t" style="left:25.30px;top:352.00px;font-size:10.80px;line-height:10.80px;color:#1c1c1c;letter-spacing:0.200px;">K88008023</span>
<span class="t" style="left:216.20px;top:352.00px;font-size:10.80px;line-height:10.80px;color:#1c1c1c;letter-spacing:0.200px;">K88</span>
<span class="t" style="left:415.80px;top:352.00px;font-size:10.80px;line-height:10.80px;color:#1c1c1c;letter-spacing:0.200px;">8008023</span>
<span class="t" style="left:25.30px;top:370.00px;font-size:10.80px;line-height:10.80px;color:#1c1c1c;letter-spacing:0.200px;">K44546589</span>
<span class="t" style="left:216.20px;top:370.00px;font-size:10.80px;line-height:10.80px;color:#1c1c1c;letter-spacing:0.200px;">K44</span>
<span class="t" style="left:415.80px;top:370.00px;font-size:10.80px;line-height:10.80px;color:#1c1c1c;letter-spacing:0.200px;">4546589</span>
<span class="t" style="left:25.30px;top:387.00px;font-size:10.80px;line-height:10.80px;color:#1c1c1c;letter-spacing:0.200px;">K76892341</span>
<span class="t" style="left:216.20px;top:387.00px;font-size:10.80px;line-height:10.80px;color:#1c1c1c;letter-spacing:0.200px;">K76</span>
<span class="t" style="left:415.80px;top:387.00px;font-size:10.80px;line-height:10.80px;color:#1c1c1c;letter-spacing:0.200px;">6892341</span>
<span class="t" style="left:25.30px;top:405.00px;font-size:10.80px;line-height:10.80px;color:#1c1c1c;letter-spacing:0.200px;">K00987651</span>
<span class="t" style="left:216.20px;top:405.00px;font-size:10.80px;line-height:10.80px;color:#1c1c1c;letter-spacing:0.200px;">K00</span>
<span class="t" style="left:415.80px;top:405.00px;font-size:10.80px;line-height:10.80px;color:#1c1c1c;letter-spacing:0.200px;">0987651</span>
<span class="t" style="left:25.30px;top:423.00px;font-size:10.80px;line-height:10.80px;color:#1c1c1c;letter-spacing:0.200px;">K34567927</span>
<span class="t" style="left:216.20px;top:423.00px;font-size:10.80px;line-height:10.80px;color:#1c1c1c;letter-spacing:0.200px;">K34</span>
<span class="t" style="left:415.80px;top:423.00px;font-size:10.80px;line-height:10.80px;color:#1c1c1c;letter-spacing:0.200px;">4567927</span>
<div class="b " style="left:411.40px;top:275.10px;width:259.00px;height:19.80px;border:2px solid #217346;box-sizing:border-box;"></div>
<div class="b " style="left:666.30px;top:291.30px;width:5.50px;height:5.30px;background:#217346;border:1px solid #fff;box-sizing:border-box;"></div>
<svg class="b" style="left:0;top:0" width="768" height="471" viewBox="0 0 768 471">
<rect x="380.6" y="155.5" width="293.8" height="28.2" fill="none" stroke="#dc2129" stroke-width="4.2"/>
<path d="M547.8 181.5 L551 184.5 L570 206 L590 228 L611 251 L634.5 276.8" fill="none" stroke="#dc2129" stroke-width="4.2" stroke-linecap="round" stroke-linejoin="round"/>
</svg>
</div></body></html>
